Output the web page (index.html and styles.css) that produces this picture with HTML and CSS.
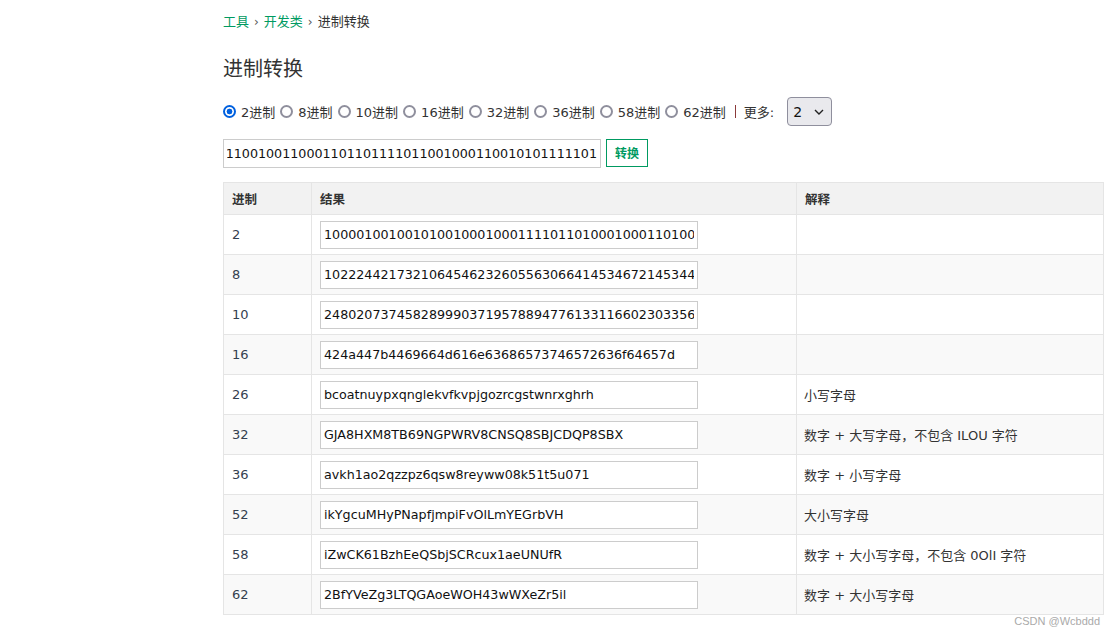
FILE: index.html
```html
<!DOCTYPE html>
<html lang="zh-CN">
<head>
<meta charset="utf-8">
<title>进制转换</title>
<link rel="stylesheet" href="styles.css">
</head>
<body>
<div class="page">
  <nav class="crumbs">
    <a href="#">工具</a><span class="sep">›</span><a href="#">开发类</a><span class="sep">›</span><span>进制转换</span>
  </nav>
  <h1 class="title">进制转换</h1>
  <div class="bases">
    <label class="opt"><input type="radio" name="b" checked><span>2进制</span></label>
    <label class="opt"><input type="radio" name="b"><span>8进制</span></label>
    <label class="opt"><input type="radio" name="b"><span>10进制</span></label>
    <label class="opt"><input type="radio" name="b"><span>16进制</span></label>
    <label class="opt"><input type="radio" name="b"><span>32进制</span></label>
    <label class="opt"><input type="radio" name="b"><span>36进制</span></label>
    <label class="opt"><input type="radio" name="b"><span>58进制</span></label>
    <label class="opt"><input type="radio" name="b"><span>62进制</span></label>
    <span class="bar"></span>
    <span class="more">更多:</span>
    <span class="selwrap">
      <select class="sel"><option>2</option><option>3</option><option>4</option></select>
      <svg class="chev" width="10" height="6" viewBox="0 0 10 6"><path d="M1 1l4 4 4-4" fill="none" stroke="#222" stroke-width="1.4"/></svg>
    </span>
  </div>
  <div class="inrow">
    <input class="src" type="text" data-base="2" value="1000010010010100100010001111011010001000110100101100110010011010110000101101110011000110110100001100101011100110111010001100101011100100110001101101111011001000110010101111101">
    <button class="go" type="button">转换</button>
  </div>
  <table class="res">
    <colgroup><col class="c1"><col class="c2"><col class="c3"></colgroup>
    <thead>
      <tr><th>进制</th><th>结果</th><th>解释</th></tr>
    </thead>
    <tbody>
      <tr><td>2</td><td><input class="out" data-base="2" value="1000010010010100100010001111011010001000110100101100110010011010110000101101110011000110110100001100101011100110111010001100101011100100110001101101111011001000110010101111101"></td><td></td></tr>
      <tr><td>8</td><td><input class="out" data-base="8" value="10222442173210645462326055630664145346721453446155731062575"></td><td></td></tr>
      <tr><td>10</td><td><input class="out" data-base="10" value="24802073745828999037195788947761331166023033569"></td><td></td></tr>
      <tr><td>16</td><td><input class="out" data-base="16" value="424a447b4469664d616e63686573746572636f64657d"></td><td></td></tr>
      <tr><td>26</td><td><input class="out" value="bcoatnuypxqnglekvfkvpjgozrcgstwnrxghrh"></td><td>小写字母</td></tr>
      <tr><td>32</td><td><input class="out" value="GJA8HXM8TB69NGPWRV8CNSQ8SBJCDQP8SBX"></td><td>数字 + 大写字母，不包含 ILOU 字符</td></tr>
      <tr><td>36</td><td><input class="out" value="avkh1ao2qzzpz6qsw8reyww08k51t5u071"></td><td>数字 + 小写字母</td></tr>
      <tr><td>52</td><td><input class="out" value="ikYgcuMHyPNapfjmpiFvOlLmYEGrbVH"></td><td>大小写字母</td></tr>
      <tr><td>58</td><td><input class="out" value="iZwCK61BzhEeQSbjSCRcux1aeUNUfR"></td><td>数字 + 大小写字母，不包含 0OlI 字符</td></tr>
      <tr><td>62</td><td><input class="out" value="2BfYVeZg3LTQGAoeWOH43wWXeZr5il"></td><td>数字 + 大小写字母</td></tr>
    </tbody>
  </table>
</div>
<div class="mark">CSDN @Wcbddd</div>
<script src="app.js"></script>
</body>
</html>
```

FILE: styles.css
```css
html, body {
  margin: 0;
  padding: 0;
  background: #fff;
}
body {
  font-family: "DejaVu Sans", "Noto Sans CJK SC", sans-serif;
  font-size: 13px;
  color: #333;
}
.page {
  padding: 12px 0 0 223px;
  width: 880px;
}
.crumbs {
  line-height: 20px;
  height: 20px;
  display: flex;
  align-items: center;
}
.crumbs a {
  color: #009a61;
  text-decoration: none;
}
.crumbs .sep {
  color: #555;
  margin: 0 5px;
  font-size: 12px;
}
.title {
  margin: 23px 0 0;
  font-size: 20px;
  font-weight: normal;
  line-height: 28px;
  color: #333;
}
.bases {
  margin-top: 14px;
  height: 29px;
  display: flex;
  align-items: center;
  gap: 5px;
}
.opt {
  display: flex;
  align-items: center;
  gap: 5px;
}
.opt input {
  appearance: none;
  -webkit-appearance: none;
  width: 13px;
  height: 13px;
  margin: 0;
  border: 2px solid #8f8f9d;
  border-radius: 50%;
  box-sizing: border-box;
  background: #fff;
}
.opt input:checked {
  border-color: #0060df;
  background: radial-gradient(circle, #0060df 0 2.6px, #fff 3.2px);
}
.bar {
  width: 1px;
  height: 13px;
  background: #8b3a3a;
  margin: 0 3px 0 4px;
}
.more {
  margin-right: 8px;
}
.selwrap {
  position: relative;
  display: inline-block;
}
.sel {
  appearance: none;
  -webkit-appearance: none;
  width: 45px;
  height: 29px;
  box-sizing: border-box;
  border: 1px solid #8f8f9d;
  border-radius: 4px;
  background: #e9e9ed;
  font-family: "DejaVu Sans", sans-serif;
  font-size: 14px;
  color: #111;
  padding: 0 0 0 5px;
  margin: 0;
}
.chev {
  position: absolute;
  right: 8px;
  top: 12px;
  pointer-events: none;
}
.inrow {
  margin-top: 13px;
  display: flex;
  align-items: center;
  gap: 5px;
}
.src {
  width: 378px;
  height: 29px;
  box-sizing: border-box;
  border: 1px solid #ccc;
  padding: 0 3px;
  margin: 0;
  font-family: "DejaVu Sans", sans-serif;
  font-size: 12.7px;
  color: #111;
  direction: rtl;
  outline: none;
}
.go {
  height: 28px;
  margin-top: -2px;
  padding: 0 8px;
  border: 1px solid #009a61;
  background: #fff;
  color: #009a61;
  font-family: "Noto Sans CJK SC", sans-serif;
  font-weight: bold;
  font-size: 12px;
  cursor: pointer;
}
.res {
  margin-top: 14px;
  width: 880px;
  border-collapse: collapse;
  table-layout: fixed;
}
.c1 { width: 88px; }
.c2 { width: 485px; }
.c3 { width: 307px; }
.res th, .res td {
  border: 1px solid #e5e5e5;
  text-align: left;
  padding: 0 8px;
  vertical-align: middle;
}
.res th {
  background: #f2f2f2;
  font-weight: bold;
  height: 31px;
  font-size: 12.5px;
}
.res td {
  height: 39px;
}
.res td:last-child {
  padding-left: 7px;
}
.res tbody tr:nth-child(even) td {
  background: #f9f9f9;
}
.res td:first-child {
  color: #34404f;
}
.out {
  width: 378px;
  height: 28px;
  box-sizing: border-box;
  border: 1px solid #ccc;
  background: #fff;
  padding: 0 3px;
  margin: 0;
  font-family: "DejaVu Sans", sans-serif;
  font-size: 12.7px;
  color: #111;
  display: block;
  outline: none;
}
.mark {
  position: absolute;
  right: 14px;
  top: 615px;
  font-family: "Liberation Sans", sans-serif;
  font-size: 11px;
  color: #aaa;
}
```

FILE: app.js
```js
(function () {
  var hex = "424a447b4469664d616e63686573746572636f64657d";
  if (typeof BigInt === "undefined") return;
  var n = BigInt("0x" + hex);
  var els = document.querySelectorAll("[data-base]");
  for (var i = 0; i < els.length; i++) {
    els[i].value = n.toString(parseInt(els[i].getAttribute("data-base"), 10));
  }
})();
```
